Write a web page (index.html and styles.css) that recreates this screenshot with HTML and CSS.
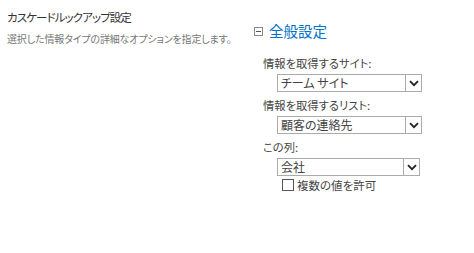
FILE: index.html
```html
<!DOCTYPE html>
<html lang="ja">
<head>
<meta charset="utf-8">
<link rel="stylesheet" href="styles.css">
</head>
<body>
<div class="page">
  <div class="left">
    <div class="title">カスケードルックアップ設定</div>
    <div class="desc">選択した情報タイプの詳細なオプションを指定します。</div>
  </div>
  <div class="right">
    <div class="section-head">
      <span class="toggle"></span>
      <span class="section-title">全般設定</span>
    </div>
    <div class="field first">
      <div class="label">情報を取得するサイト:</div>
      <div class="select"><span class="value">チーム サイト</span><span class="arrow"><svg width="10" height="7" viewBox="0 0 10 7"><path d="M1 1.2 L5 5.2 L9 1.2" fill="none" stroke="#222" stroke-width="1.8"/></svg></span></div>
    </div>
    <div class="field">
      <div class="label">情報を取得するリスト:</div>
      <div class="select"><span class="value">顧客の連絡先</span><span class="arrow"><svg width="10" height="7" viewBox="0 0 10 7"><path d="M1 1.2 L5 5.2 L9 1.2" fill="none" stroke="#222" stroke-width="1.8"/></svg></span></div>
    </div>
    <div class="field">
      <div class="label">この列:</div>
      <div class="select short"><span class="value">会社</span><span class="arrow"><svg width="10" height="7" viewBox="0 0 10 7"><path d="M1 1.2 L5 5.2 L9 1.2" fill="none" stroke="#222" stroke-width="1.8"/></svg></span></div>
      <div class="check-row"><span class="checkbox"></span><span class="check-label">複数の値を許可</span></div>
    </div>
  </div>
</div>
</body>
</html>
```
FILE: styles.css
```css
html, body {
  margin: 0;
  padding: 0;
  background: #fff;
}
body {
  font-family: "Noto Sans CJK JP", "Noto Sans", sans-serif;
  font-feature-settings: "palt";
  color: #444;
}
.page {
  display: flex;
  padding: 10px 0 0 7px;
}
.left {
  width: 247px;
}
.title {
  font-size: 11.5px;
  line-height: 14px;
  color: #333;
  letter-spacing: -0.9px;
}
.desc {
  margin-top: 8px;
  font-size: 10px;
  line-height: 14px;
  color: #777;
  letter-spacing: -0.15px;
}
.right {
  display: flex;
  flex-direction: column;
}
.section-head {
  display: flex;
  align-items: center;
  margin-top: 12px;
  height: 18px;
}
.toggle {
  width: 7px;
  height: 7px;
  border: 1px solid #888;
  position: relative;
  margin-right: 6px;
}
.toggle::after {
  content: "";
  position: absolute;
  left: 1px;
  top: 3px;
  width: 5px;
  height: 1px;
  background: #555;
}
.section-title {
  font-size: 14.5px;
  color: #0072c6;
  line-height: 18px;
}
.field {
  margin-left: 9px;
}
.field.first .label {
  margin-top: 16px;
}
.label {
  font-size: 11.3px;
  line-height: 14px;
  margin-top: 6px;
  color: #444;
}
.select {
  margin-left: 14px;
  margin-top: 4px;
  width: 143px;
  height: 16px;
  border: 1px solid #ababab;
  display: flex;
  align-items: center;
  justify-content: space-between;
}
.select.short {
  width: 141px;
}
.value {
  font-size: 12px;
  color: #444;
  padding-left: 3px;
  line-height: 16px;
}
.arrow {
  width: 16px;
  height: 16px;
  box-sizing: border-box;
  border-left: 1px solid #ababab;
  display: flex;
  align-items: center;
  justify-content: center;
  background: #fdfdfd;
}
.check-row {
  display: flex;
  align-items: center;
  margin-left: 19px;
  margin-top: 2px;
}
.checkbox {
  width: 10px;
  height: 10px;
  border: 1px solid #555;
  margin-right: 3px;
}
.check-label {
  font-size: 11.5px;
  line-height: 14px;
  color: #444;
}
```
